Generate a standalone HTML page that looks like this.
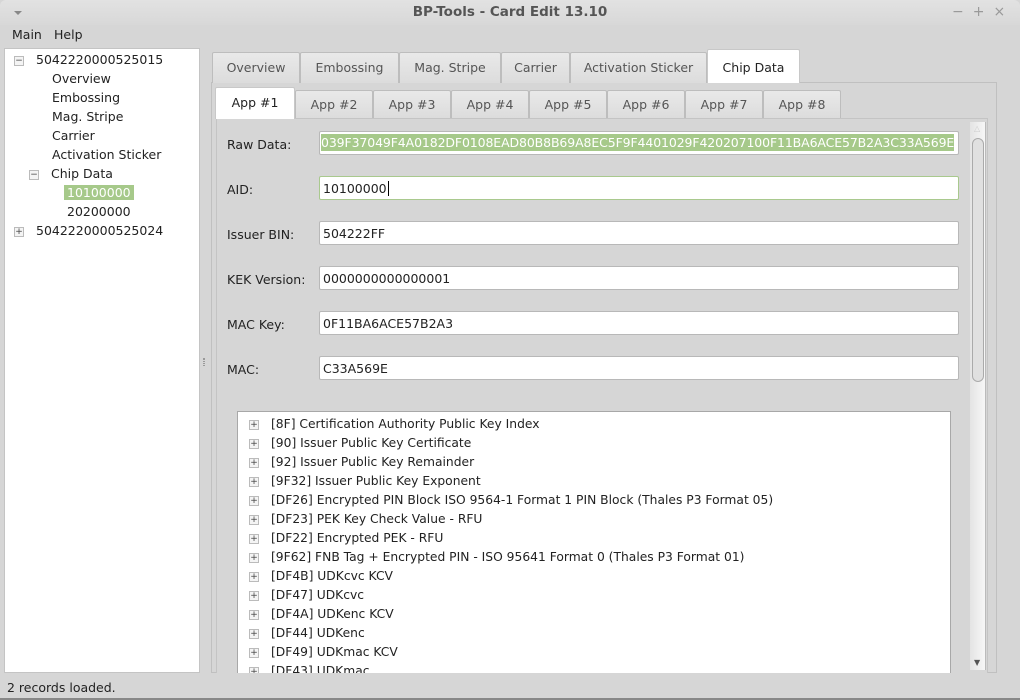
<!DOCTYPE html>
<html><head><style>
*{box-sizing:border-box;margin:0;padding:0}
body{width:1020px;height:700px;background:#d6d6d6;font-family:"DejaVu Sans","Liberation Sans",sans-serif;font-size:12.5px;color:#222;position:relative;overflow:hidden}
.a{position:absolute;white-space:nowrap}
.tab{position:absolute;height:31px;border:1px solid #bdbdbd;border-bottom:none;background:linear-gradient(#e9e9e9,#dcdcdc);color:#555;text-align:center;line-height:30px;border-radius:2px 2px 0 0}
.tab.on{background:#fff;color:#222;border-color:#c8c8c8}
.inp{position:absolute;left:319px;width:640px;height:24px;background:#fff;border:1px solid #b8b8b8;border-radius:2px;padding-left:3px;line-height:22px}
.lbl{position:absolute;left:227px}
.pl{display:inline-block;width:10px;height:10px;border:1px solid #bbb;background:#f4f4f4;font-size:9px;line-height:8px;text-align:center;color:#444;vertical-align:1px;margin-right:12px}
.row{height:19px;line-height:19px}
</style></head><body>
<div class="a" style="left:0;top:0;width:1020px;height:25px;background:linear-gradient(#e2e2e2,#d8d8d8);border-top-left-radius:6px;border-top-right-radius:6px"></div>
<div class="a" style="left:14px;top:11px;width:0;height:0;border:4px solid transparent;border-top:4px solid #888"></div>
<div class="a" style="left:0;width:1020px;top:4px;text-align:center;font-weight:bold;color:#555;font-size:13.5px">BP-Tools - Card Edit 13.10</div>
<div class="a" style="left:952px;top:4px;color:#999;font-size:14px;letter-spacing:9px">−+×</div>
<div class="a" style="left:12px;top:27px">Main</div>
<div class="a" style="left:54px;top:27px">Help</div>
<!-- left tree -->
<div class="a" style="left:4px;top:48px;width:196px;height:625px;background:#fff;border:1px solid #c4c4c4"></div>
<div class="a" style="left:14px;top:50px;line-height:19px">
<div><span class="pl">−</span>5042220000525015</div>
<div style="padding-left:38px">Overview</div>
<div style="padding-left:38px">Embossing</div>
<div style="padding-left:38px">Mag. Stripe</div>
<div style="padding-left:38px">Carrier</div>
<div style="padding-left:38px">Activation Sticker</div>
<div style="padding-left:15px"><span class="pl">−</span>Chip Data</div>
<div style="padding-left:50px"><span style="background:#a6c98a;color:#fff;padding:0 3px">10100000</span></div>
<div style="padding-left:53px">20200000</div>
<div><span class="pl">+</span>5042220000525024</div>
</div>
<div class="a" style="left:203px;top:358px;width:2px;height:8px;border-left:1px dotted #999;border-right:1px dotted #999"></div>
<!-- outer pane -->
<div class="a" style="left:211px;top:82px;width:786px;height:591px;border:1px solid #c0c0c0;background:#d6d6d6"></div>
<div class="tab" style="left:212px;top:52px;width:88px">Overview</div>
<div class="tab" style="left:300px;top:52px;width:99px">Embossing</div>
<div class="tab" style="left:399px;top:52px;width:102px">Mag. Stripe</div>
<div class="tab" style="left:501px;top:52px;width:69px">Carrier</div>
<div class="tab" style="left:570px;top:52px;width:137px">Activation Sticker</div>
<div class="tab on" style="left:707px;top:49px;width:93px;height:34px;line-height:35px">Chip Data</div>
<!-- inner pane -->
<div class="a" style="left:216px;top:118px;width:772px;height:560px;border:1px solid #c4c4c4;background:#d6d6d6"></div>
<div class="tab" style="left:295px;top:90px;width:78px;height:28px;line-height:27px">App #2</div>
<div class="tab" style="left:373px;top:90px;width:78px;height:28px;line-height:27px">App #3</div>
<div class="tab" style="left:451px;top:90px;width:78px;height:28px;line-height:27px">App #4</div>
<div class="tab" style="left:529px;top:90px;width:78px;height:28px;line-height:27px">App #5</div>
<div class="tab" style="left:607px;top:90px;width:78px;height:28px;line-height:27px">App #6</div>
<div class="tab" style="left:685px;top:90px;width:78px;height:28px;line-height:27px">App #7</div>
<div class="tab" style="left:763px;top:90px;width:78px;height:28px;line-height:27px">App #8</div>
<div class="tab on" style="left:215px;top:87px;width:80px;height:32px;line-height:30px">App #1</div>
<!-- fields -->
<div class="lbl" style="top:137px">Raw Data:</div>
<div class="inp" style="top:131px;color:#fff;overflow:hidden;padding-left:1px;letter-spacing:-0.12px"><span style="background:#a6c98a;padding:1px 0">039F37049F4A0182DF0108EAD80B8B69A8EC5F9F4401029F420207100F11BA6ACE57B2A3C33A569E</span></div>
<div class="lbl" style="top:182px">AID:</div>
<div class="inp" style="top:176px;border-color:#a9c98e;padding-top:1px">10100000<span style="border-left:1px solid #000;margin-left:1px"></span></div>
<div class="lbl" style="top:227px">Issuer BIN:</div>
<div class="inp" style="top:221px;padding-top:1px">504222FF</div>
<div class="lbl" style="top:272px">KEK Version:</div>
<div class="inp" style="top:266px;padding-top:1px">0000000000000001</div>
<div class="lbl" style="top:317px">MAC Key:</div>
<div class="inp" style="top:311px;padding-top:1px">0F11BA6ACE57B2A3</div>
<div class="lbl" style="top:362px">MAC:</div>
<div class="inp" style="top:356px;padding-top:1px">C33A569E</div>
<!-- scrollbar -->
<div class="a" style="left:970px;top:122px;width:16px;height:548px;background:linear-gradient(90deg,#e4e4e4,#f7f7f7);border-right:1px solid #bbb"></div>
<div class="a" style="left:972px;top:138px;width:12px;height:244px;border:1px solid #aaa;border-radius:6px;background:#e0e0e0"></div>
<div class="a" style="left:974px;top:124px;color:#ccc;font-size:8px">△</div>
<div class="a" style="left:974px;top:658px;color:#555;font-size:8px">▼</div>
<!-- list -->
<div class="a" style="left:237px;top:411px;width:714px;height:262px;background:#fff;border:1px solid #a8a8a8;border-bottom:none;overflow:hidden;padding:3px 0 0 11px;font-size:12.3px">
<div class="row"><span class="pl">+</span>[8F] Certification Authority Public Key Index</div>
<div class="row"><span class="pl">+</span>[90] Issuer Public Key Certificate</div>
<div class="row"><span class="pl">+</span>[92] Issuer Public Key Remainder</div>
<div class="row"><span class="pl">+</span>[9F32] Issuer Public Key Exponent</div>
<div class="row"><span class="pl">+</span>[DF26] Encrypted PIN Block ISO 9564-1 Format 1 PIN Block (Thales P3 Format 05)</div>
<div class="row"><span class="pl">+</span>[DF23] PEK Key Check Value - RFU</div>
<div class="row"><span class="pl">+</span>[DF22] Encrypted PEK - RFU</div>
<div class="row"><span class="pl">+</span>[9F62] FNB Tag + Encrypted PIN - ISO 95641 Format 0 (Thales P3 Format 01)</div>
<div class="row"><span class="pl">+</span>[DF4B] UDKcvc KCV</div>
<div class="row"><span class="pl">+</span>[DF47] UDKcvc</div>
<div class="row"><span class="pl">+</span>[DF4A] UDKenc KCV</div>
<div class="row"><span class="pl">+</span>[DF44] UDKenc</div>
<div class="row"><span class="pl">+</span>[DF49] UDKmac KCV</div>
<div class="row"><span class="pl">+</span>[DF43] UDKmac</div>
</div>
<div class="a" style="left:0;top:673px;width:1020px;height:27px;background:#d6d6d6"></div>
<div class="a" style="left:7px;top:680px">2 records loaded.</div>
<div class="a" style="left:0;top:698px;width:1020px;height:2px;background:#888"></div>
</body></html>
